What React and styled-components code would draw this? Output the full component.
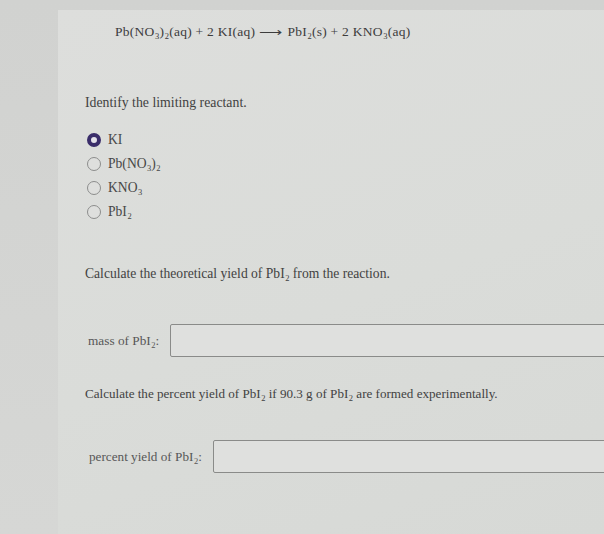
import * as React from 'react';
import styled, { createGlobalStyle } from 'styled-components';

const GlobalStyle = createGlobalStyle`
  html, body {
    margin: 0;
    padding: 0;
    background: #d3d4d2;
    font-family: "Liberation Serif", "Times New Roman", serif;
  }
`;

const Screen = styled.div`
  width: 604px;
  height: 534px;
  overflow: hidden;
  background: linear-gradient(to bottom, #d1d2d0 0%, #d6d7d5 100%);
  padding: 10px 0 0 58px;
  box-sizing: border-box;
`;

const Panel = styled.div`
  height: 100%;
  background: linear-gradient(160deg, #dddedc 0%, #dadcd9 55%, #d7d9d6 100%);
  padding: 12px 0 0 27px;
  box-sizing: border-box;
  color: #454545;
`;

const Equation = styled.div`
  font-size: 13.5px;
  line-height: 20px;
  letter-spacing: 0.25px;
  color: #3c3c3c;
  padding-left: 30px;
  white-space: nowrap;
`;

const Arrow = styled.span`
  display: inline-block;
  margin: 0 8px 0 7px;
  font-size: 12px;
  transform: scaleX(1.35);
`;

const Sub = styled.sub`
  font-size: 8.5px;
  vertical-align: -3px;
  line-height: 0;
  margin-left: 0.5px;
`;

const Prompt = styled.p`
  margin: ${(p) => p.$top}px 0 0 0;
  font-size: ${(p) => p.$size || 13.3}px;
  color: #424242;
  line-height: 18px;
  white-space: nowrap;
`;

const Choices = styled.div`
  display: flex;
  flex-direction: column;
  gap: 6px;
  margin: 19px 0 0 2px;
`;

const Choice = styled.label`
  display: flex;
  align-items: center;
  gap: 7px;
  height: 18px;
  font-size: 13.6px;
  color: #474747;
`;

const ChoiceText = styled.span`
  white-space: nowrap;
`;

const Radio = styled.span`
  width: 14px;
  height: 14px;
  flex: none;
  border-radius: 50%;
  box-sizing: border-box;
  border: ${(p) => (p.$checked ? '4px solid #3a2d6a' : '1.3px solid #8c8d8c')};
  background: ${(p) => (p.$checked ? '#e4e2ea' : '#dedfdd')};
`;

const AnswerRow = styled.div`
  display: flex;
  align-items: center;
  margin-top: ${(p) => p.$top}px;
  padding-left: ${(p) => p.$indent}px;
`;

const AnswerLabel = styled.span`
  font-size: ${(p) => p.$size}px;
  color: #575757;
  white-space: nowrap;
  width: ${(p) => p.$width}px;
  flex: none;
`;

const AnswerBox = styled.div`
  flex: 1;
  height: 31px;
  margin-right: -20px;
  border: 1px solid #8a8b89;
  border-radius: 2px;
  background: #dfe0de;
`;

const PbI2 = () => (
  <>
    PbI<Sub>2</Sub>
  </>
);

const App = () => {
  const options = [
    { id: 'ki', label: <>KI</>, checked: true },
    { id: 'pbno3', label: <>Pb(NO<Sub>3</Sub>)<Sub>2</Sub></> },
    { id: 'kno3', label: <>KNO<Sub>3</Sub></> },
    { id: 'pbi2', label: <PbI2 /> },
  ];

  return (
    <>
      <GlobalStyle />
      <Screen>
        <Panel>
          <Equation>
            Pb(NO<Sub>3</Sub>)<Sub>2</Sub>(aq) + 2 KI(aq)
            <Arrow>⟶</Arrow>
            PbI<Sub>2</Sub>(s) + 2 KNO<Sub>3</Sub>(aq)
          </Equation>

          <Prompt $top={52} $size={13.8}>Identify the limiting reactant.</Prompt>

          <Choices>
            {options.map((o) => (
              <Choice key={o.id}>
                <Radio $checked={o.checked} />
                <ChoiceText>{o.label}</ChoiceText>
              </Choice>
            ))}
          </Choices>

          <Prompt $top={44} $size={13.6}>
            Calculate the theoretical yield of <PbI2 /> from the reaction.
          </Prompt>

          <AnswerRow $top={41} $indent={3}>
            <AnswerLabel $width={82} $size={13.3}>
              mass of <PbI2 />:
            </AnswerLabel>
            <AnswerBox />
          </AnswerRow>

          <Prompt $top={28} $size={13.1}>
            Calculate the percent yield of <PbI2 /> if 90.3 g of <PbI2 /> are formed
            experimentally.
          </Prompt>

          <AnswerRow $top={37} $indent={4}>
            <AnswerLabel $width={124} $size={13.2}>
              percent yield of <PbI2 />:
            </AnswerLabel>
            <AnswerBox />
          </AnswerRow>
        </Panel>
      </Screen>
    </>
  );
};

export default App;
